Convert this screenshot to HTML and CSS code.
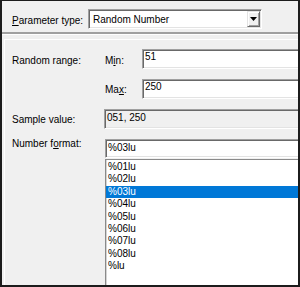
FILE: index.html
```html
<!doctype html>
<html lang="en">
  <head>
    <meta charset="UTF-8" />
    <title>Parameter type</title>
    <link rel="stylesheet" href="styles.css">
  </head>
  <body>
    <div class="frame">
      <div class="type-bar">
        <span class="type-label"><u>P</u>arameter type:</span>
        <div class="combo">
          <span class="combo-text">Random Number</span>
          <span class="combo-btn">
            <svg width="7" height="4" viewBox="0 0 7 4"><path d="M0 0h7L3.5 4z" fill="#000"/></svg>
          </span>
        </div>
      </div>
      <div class="divider"></div>

      <div class="panel">
        <div class="row">
          <span class="label label-range">Random range:</span>
          <div class="minmax">
            <div class="mm-row">
              <span class="label label-min">M<u>i</u>n:</span>
              <div class="field">51</div>
            </div>
            <div class="mm-row">
              <span class="label label-max">Ma<u>x</u>:</span>
              <div class="field">250</div>
            </div>
          </div>
        </div>

        <div class="row">
          <span class="label label-sample">Sample value:</span>
          <div class="field field-readonly">051, 250</div>
        </div>

        <div class="row row-format">
          <span class="label label-format">Number f<u>o</u>rmat:</span>
          <div class="format">
            <div class="field field-edit">%03lu</div>
            <ul class="list">
              <li>%01lu</li>
              <li>%02lu</li>
              <li class="selected">%03lu</li>
              <li>%04lu</li>
              <li>%05lu</li>
              <li>%06lu</li>
              <li>%07lu</li>
              <li>%08lu</li>
              <li>%lu</li>
            </ul>
          </div>
        </div>
      </div>
    </div>
  </body>
</html>
```

FILE: styles.css
```css
body {
  margin: 0;
  background-color: #f0f0f0;
}
.frame {
  width: 300px;
  height: 287px;
  box-sizing: border-box;
  border-style: solid;
  border-color: #1c1c1c;
  border-width: 1px 2px 2px 2px;
  background-color: #f0f0f0;
  overflow: hidden;
  font-family: "Liberation Sans", Arial, sans-serif;
  font-size: 10px;
  line-height: 12px;
  color: #000;
}
u {
  text-decoration-thickness: 1px;
  text-underline-offset: 1px;
}
/* top combo row */
.type-bar {
  display: flex;
  align-items: flex-start;
  height: 31px;
  padding-left: 10px;
}
.type-label {
  width: 76px;
  margin-top: 14px;
}
.combo {
  display: flex;
  width: 174px;
  height: 20px;
  margin-top: 8px;
  box-sizing: border-box;
  border: 1px solid;
  border-color: #a0a0a0 #ffffff #ffffff #a0a0a0;
  box-shadow: inset 1px 1px #696969, inset -1px -1px #e3e3e3;
  background-color: #fff;
  padding: 1px;
}
.combo-text {
  flex: 1;
  padding: 3px 0 0 3px;
}
.combo-btn {
  display: flex;
  align-items: center;
  justify-content: center;
  width: 13px;
  box-sizing: border-box;
  background-color: #f0f0f0;
  border: 1px solid;
  border-color: #e3e3e3 #696969 #696969 #e3e3e3;
  box-shadow: inset 1px 1px #fff, inset -1px -1px #a0a0a0;
}
.divider {
  height: 2px;
  background-color: #a0a0a0;
  border-bottom: 1px solid #fff;
}
/* settings panel */
.panel {
  width: 320px;
  margin: 4px 0 0 2px;
  padding: 9px 0 0 7px;
  border-top: 1px solid #fff;
  border-left: 1px solid #fff;
}
.row {
  display: grid;
  grid-template-columns: 93px 1fr;
  margin-bottom: 10px;
}
.row-format {
  margin-top: 3px;
}
.minmax {
  display: flex;
  flex-direction: column;
  gap: 10px;
}
.mm-row {
  display: grid;
  grid-template-columns: 37px 1fr;
}
.label-range,
.label-min {
  padding-top: 6px;
}
.label-max,
.label-sample {
  padding-top: 5px;
}
.label-format {
  margin-top: -1px;
}
.field {
  height: 20px;
  box-sizing: border-box;
  padding: 1px 0 0 1px;
  border: 1px solid;
  border-color: #a0a0a0 #ffffff #ffffff #a0a0a0;
  box-shadow: inset 1px 1px #696969, inset -1px -1px #e3e3e3;
  background-color: #fff;
  background-clip: padding-box;
  padding-left: 2px;
}
.field-readonly {
  background-color: #f0f0f0;
  margin-left: -1px;
  padding-top: 2px;
}
.field-edit {
  height: 19px;
  padding-top: 2px;
}
.format {
  display: flex;
  flex-direction: column;
  gap: 1px;
}
.list {
  list-style: none;
  margin: 0;
  padding: 1px 0 0 0;
  height: 140px;
  border: 1px solid #8a8a8a;
  box-shadow: inset 1px 0 #d4d4d4;
  background-color: #fff;
}
.list li {
  height: 12.4px;
  line-height: 12.4px;
  padding-left: 2px;
}
.list li.selected {
  background-color: #0078d7;
  color: #fff;
}
```
